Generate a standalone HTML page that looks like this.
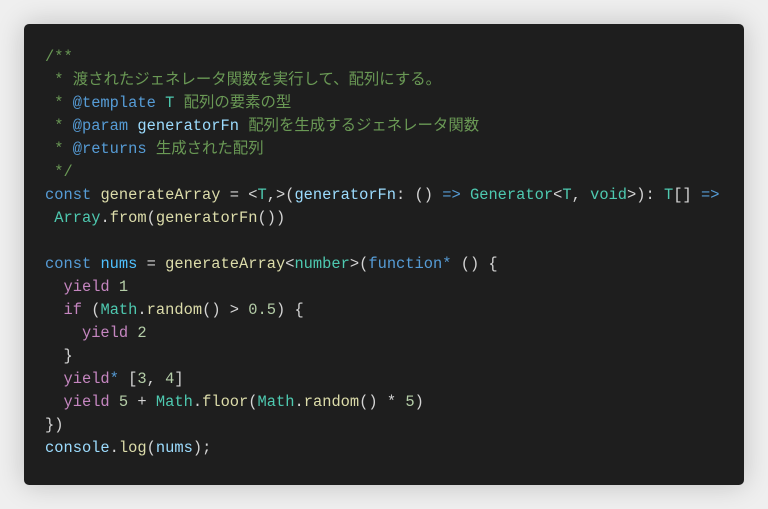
<!DOCTYPE html>
<html><head><meta charset="utf-8"><style>
html,body{margin:0;padding:0;width:768px;height:509px;background:#efefef;overflow:hidden}
.card{position:absolute;left:24px;top:24px;width:720px;height:461px;background:#1e1e1e;border-radius:5px;box-shadow:0 0 28px rgba(0,0,0,0.2)}
pre{position:absolute;left:21px;top:22px;margin:0;font-family:"Liberation Mono","Noto Sans CJK JP",monospace;font-size:15.4px;line-height:23px;color:#d4d4d4;white-space:pre}
.c{color:#6a9955}.k{color:#569cd6}.f{color:#dcdcaa}.v{color:#9cdcfe}.t{color:#4ec9b0}.p{color:#c586c0}.n{color:#b5cea8}.cv{color:#4fc1ff}
</style></head><body><div class="card"><pre><span class="c">/**
 * 渡されたジェネレータ関数を実行して、配列にする。
 * <span class="k">@template</span> <span class="t">T</span> 配列の要素の型
 * <span class="k">@param</span> <span class="v">generatorFn</span> 配列を生成するジェネレータ関数
 * <span class="k">@returns</span> 生成された配列
 */</span>
<span class="k">const</span> <span class="f">generateArray</span> = &lt;<span class="t">T</span>,&gt;(<span class="v">generatorFn</span>: () <span class="k">=&gt;</span> <span class="t">Generator</span>&lt;<span class="t">T</span>, <span class="t">void</span>&gt;): <span class="t">T</span>[] <span class="k">=&gt;</span>
 <span class="t">Array</span>.<span class="f">from</span>(<span class="f">generatorFn</span>())

<span class="k">const</span> <span class="cv">nums</span> = <span class="f">generateArray</span>&lt;<span class="t">number</span>&gt;(<span class="k">function</span><span class="k">*</span> () {
  <span class="p">yield</span> <span class="n">1</span>
  <span class="p">if</span> (<span class="t">Math</span>.<span class="f">random</span>() &gt; <span class="n">0.5</span>) {
    <span class="p">yield</span> <span class="n">2</span>
  }
  <span class="p">yield</span><span class="k">*</span> [<span class="n">3</span>, <span class="n">4</span>]
  <span class="p">yield</span> <span class="n">5</span> + <span class="t">Math</span>.<span class="f">floor</span>(<span class="t">Math</span>.<span class="f">random</span>() * <span class="n">5</span>)
})
<span class="v">console</span>.<span class="f">log</span>(<span class="v">nums</span>);</pre></div></body></html>
